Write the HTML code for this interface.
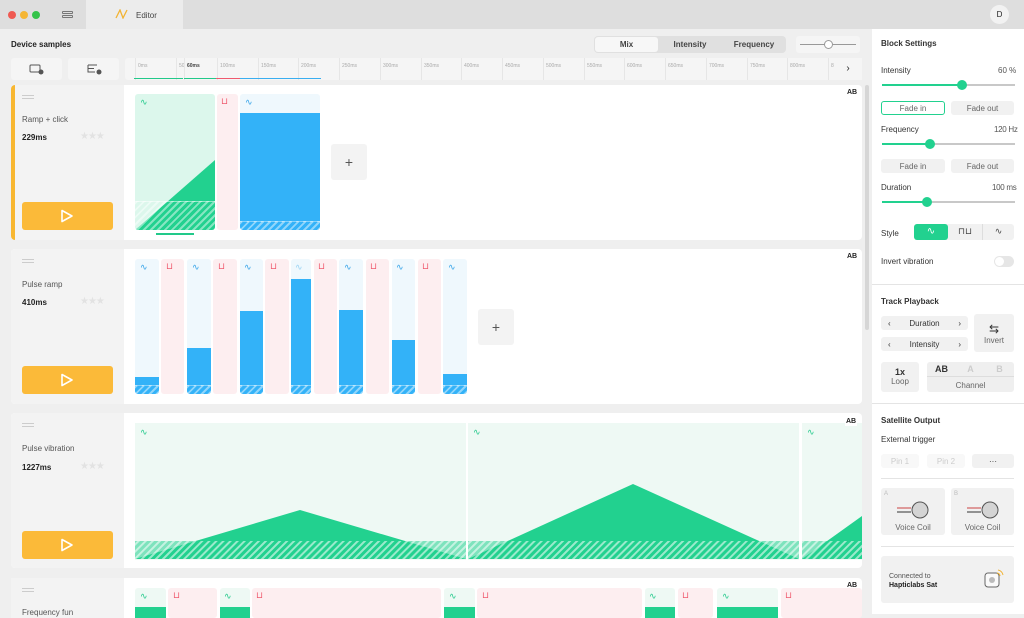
<!DOCTYPE html>
<html><head><meta charset="utf-8"><style>
*{box-sizing:border-box;margin:0;padding:0}
body{width:1024px;height:614px;overflow:hidden;background:#efefef;font-family:"Liberation Sans",sans-serif;color:#222;position:relative}
.a{position:absolute}
.t{font-size:8px}
.b{font-weight:bold}
.btn{position:absolute;background:#f1f1f1;border-radius:3px;font-size:8px;color:#666;display:flex;align-items:center;justify-content:center}
.lbl{position:absolute;font-size:8px;color:#333}
.slider{position:absolute;height:2px;background:#c8c8c8}
.slider i{position:absolute;left:0;top:0;height:2px;background:#22d18f}
.slider b{position:absolute;top:-4px;width:10px;height:10px;border-radius:50%;background:#22d18f}
.hatch{background:repeating-linear-gradient(135deg,rgba(255,255,255,.45) 0 2px,transparent 2px 5px)}
.bl{position:absolute;border-radius:3px}
.fill{position:absolute;bottom:0;width:100%;background:#33b2f8}
.fill:after{content:"";position:absolute;left:0;bottom:0;width:100%;height:8px;background:repeating-linear-gradient(135deg,rgba(255,255,255,.45) 0 2px,transparent 2px 5px);border-top:1px solid rgba(255,255,255,.4)}
.tick{position:absolute;top:58px;height:22px;border-left:1px solid #e6e6e6;font-size:5px;color:#aaa;padding:5px 0 0 2px}
.wave{position:absolute;font-size:9px}
.sep{position:absolute;left:872px;width:152px;height:1px;background:#e4e4e4}
</style></head><body>
<div class="a" style="left:0;top:0;width:1024px;height:29px;background:#dedede"></div>
<div class="a" style="left:8px;top:11px;width:8px;height:8px;border-radius:50%;background:#ef5a52"></div>
<div class="a" style="left:20px;top:11px;width:8px;height:8px;border-radius:50%;background:#f5b635"></div>
<div class="a" style="left:32px;top:11px;width:8px;height:8px;border-radius:50%;background:#35c34a"></div>
<div class="a" style="left:62px;top:11px;width:11px;height:3px;border:1px solid #777;border-radius:1px"></div>
<div class="a" style="left:62px;top:15px;width:11px;height:3px;border:1px solid #777;border-radius:1px"></div>
<div class="a" style="left:86px;top:0;width:97px;height:29px;background:#ececec"></div>
<svg class="a" style="left:115px;top:9px" width="14" height="10"><path d="M1 9 L5 1 L8 9 L12 1" stroke="#f2b333" stroke-width="1.3" fill="none"/></svg>
<div class="a t" style="left:136px;top:11px;color:#444">Editor</div>
<div class="a" style="left:990px;top:5px;width:19px;height:19px;border-radius:50%;background:#f2f2f2;font-size:8px;text-align:center;line-height:19px">D</div>

<div class="a t b" style="left:11px;top:40px">Device samples</div>
<div class="a" style="left:594px;top:36px;width:192px;height:17px;background:#e0e0e0;border-radius:4px"></div>
<div class="a" style="left:595px;top:37px;width:63px;height:15px;background:#f7f7f7;border-radius:3px;font-size:8px;text-align:center;line-height:15px;font-weight:bold;color:#444">Mix</div>
<div class="a" style="left:658px;top:37px;width:64px;height:15px;font-size:8px;text-align:center;line-height:15px;font-weight:bold;color:#444">Intensity</div>
<div class="a" style="left:722px;top:37px;width:64px;height:15px;font-size:8px;text-align:center;line-height:15px;font-weight:bold;color:#444">Frequency</div>
<div class="a" style="left:796px;top:36px;width:64px;height:17px;background:#f5f5f5;border-radius:3px"></div>
<div class="a" style="left:800px;top:44px;width:56px;height:1px;background:#999"></div>
<div class="a" style="left:824px;top:40px;width:9px;height:9px;border-radius:50%;background:#fff;border:1px solid #999"></div>

<div class="a" style="left:11px;top:58px;width:51px;height:22px;background:#f5f5f5;border-radius:3px"></div>
<div class="a" style="left:68px;top:58px;width:51px;height:22px;background:#f5f5f5;border-radius:3px"></div>
<svg class="a" style="left:29px;top:63px" width="16" height="12"><rect x="1" y="2" width="10" height="7" rx="1" fill="none" stroke="#555"/><circle cx="12" cy="9" r="2.5" fill="#555"/></svg>
<svg class="a" style="left:87px;top:63px" width="16" height="12"><path d="M1 2h9M1 2v7h7M1 5.5h6" fill="none" stroke="#555"/><circle cx="12" cy="9" r="2.5" fill="#555"/></svg>
<div class="a" style="left:125px;top:58px;width:737px;height:22px;background:#f5f5f5;border-radius:3px;overflow:hidden"></div>
<div class="tick" style="left:135px">0ms</div><div class="tick" style="left:176px">50</div><div class="tick" style="left:184px;color:#444;font-weight:bold">60ms</div>
<div class="tick" style="left:217px">100ms</div><div class="tick" style="left:258px">150ms</div><div class="tick" style="left:298px">200ms</div><div class="tick" style="left:339px">250ms</div><div class="tick" style="left:380px">300ms</div><div class="tick" style="left:421px">350ms</div><div class="tick" style="left:461px">400ms</div><div class="tick" style="left:502px">450ms</div><div class="tick" style="left:543px">500ms</div><div class="tick" style="left:584px">550ms</div><div class="tick" style="left:624px">600ms</div><div class="tick" style="left:665px">650ms</div><div class="tick" style="left:706px">700ms</div><div class="tick" style="left:747px">750ms</div><div class="tick" style="left:787px">800ms</div><div class="tick" style="left:828px">8</div>
<div class="a" style="left:834px;top:58px;width:28px;height:22px;background:#f5f5f5;font-size:10px;text-align:center;line-height:22px">›</div>
<div class="a" style="left:134px;top:78px;width:49px;height:1px;background:#22c98a"></div>
<div class="a" style="left:184px;top:78px;width:32px;height:1px;background:#22c98a"></div>
<div class="a" style="left:216px;top:78px;width:24px;height:1px;background:#ef5a6e"></div>
<div class="a" style="left:240px;top:78px;width:81px;height:1px;background:#3aaef0"></div>

<div class="a" style="left:865px;top:85px;width:4px;height:245px;background:#d6d6d6;border-radius:2px"></div>

<!-- Track 1 -->
<div class="a" style="left:11px;top:85px;width:851px;height:155px;background:#fff;border-radius:4px"></div>
<div class="a" style="left:11px;top:85px;width:113px;height:155px;background:#f3f3f3;border-left:4px solid #f8b731;border-radius:4px 0 0 4px"></div>
<div class="a" style="left:22px;top:95px;width:12px;height:4px;border-top:1px solid #ccc;border-bottom:1px solid #ccc"></div>
<div class="a t" style="left:22px;top:115px;color:#555">Ramp + click</div>
<div class="a t b" style="left:22px;top:133px">229ms</div>
<div class="a" style="left:80px;top:131px;font-size:10px;color:#e2e2e2;letter-spacing:-1px">★★★</div>
<div class="a" style="left:22px;top:202px;width:91px;height:28px;background:#fbba39;border-radius:3px"></div>
<svg class="a" style="left:60px;top:209px" width="14" height="14"><path d="M2 1.5 L12 7 L2 12.5 Z" fill="none" stroke="#fff" stroke-width="1.6" stroke-linejoin="round"/></svg>
<div class="a t b" style="left:847px;top:89px;font-size:7px">AB</div>
<div class="bl" style="left:135px;top:94px;width:80px;height:136px;background:#dcf7ec;overflow:hidden"><svg width="80" height="136" style="position:absolute;left:0;top:0"><path d="M0 136 L80 66 L80 136 Z" fill="#22d18f"/></svg><div class="hatch" style="position:absolute;left:0;top:107px;width:80px;height:29px;border-top:1px solid rgba(255,255,255,.5)"></div></div>
<div class="wave" style="left:140px;top:97px;color:#22c98a">∿</div>
<div class="a" style="left:156px;top:233px;width:38px;height:2px;background:#22c98a"></div>
<div class="bl" style="left:217px;top:94px;width:21px;height:136px;background:#fdeef0"></div>
<div class="wave" style="left:221px;top:96px;color:#ef5a6e">⊔</div>
<div class="bl" style="left:240px;top:94px;width:80px;height:136px;background:#eff8fd;overflow:hidden"><div class="fill" style="height:117px"></div></div>
<div class="wave" style="left:245px;top:97px;color:#33a2e8">∿</div>
<div class="a" style="left:331px;top:144px;width:36px;height:36px;background:#f3f3f3;border-radius:3px;text-align:center;line-height:36px;font-size:14px;color:#555">+</div>

<!-- Track 2 -->
<div class="a" style="left:11px;top:249px;width:851px;height:155px;background:#fff;border-radius:4px"></div>
<div class="a" style="left:11px;top:249px;width:113px;height:155px;background:#f3f3f3;border-radius:4px 0 0 4px"></div>
<div class="a" style="left:22px;top:259px;width:12px;height:4px;border-top:1px solid #ccc;border-bottom:1px solid #ccc"></div>
<div class="a t" style="left:22px;top:280px;color:#555">Pulse ramp</div>
<div class="a t b" style="left:22px;top:298px">410ms</div>
<div class="a" style="left:80px;top:296px;font-size:10px;color:#e2e2e2;letter-spacing:-1px">★★★</div>
<div class="a" style="left:22px;top:366px;width:91px;height:28px;background:#fbba39;border-radius:3px"></div>
<svg class="a" style="left:60px;top:373px" width="14" height="14"><path d="M2 1.5 L12 7 L2 12.5 Z" fill="none" stroke="#fff" stroke-width="1.6" stroke-linejoin="round"/></svg>
<div class="a t b" style="left:847px;top:253px;font-size:7px">AB</div>
<div class="bl" style="left:135px;top:259px;width:24px;height:135px;background:#eff8fd;overflow:hidden"><div class="fill" style="height:17px"></div></div>
<div class="bl" style="left:161px;top:259px;width:23px;height:135px;background:#fdeef0"></div>
<div class="bl" style="left:187px;top:259px;width:24px;height:135px;background:#eff8fd;overflow:hidden"><div class="fill" style="height:46px"></div></div>
<div class="bl" style="left:213px;top:259px;width:24px;height:135px;background:#fdeef0"></div>
<div class="bl" style="left:240px;top:259px;width:23px;height:135px;background:#eff8fd;overflow:hidden"><div class="fill" style="height:83px"></div></div>
<div class="bl" style="left:265px;top:259px;width:24px;height:135px;background:#fdeef0"></div>
<div class="bl" style="left:291px;top:259px;width:20px;height:135px;background:#eff8fd;overflow:hidden"><div class="fill" style="height:115px"></div></div>
<div class="bl" style="left:314px;top:259px;width:23px;height:135px;background:#fdeef0"></div>
<div class="bl" style="left:339px;top:259px;width:24px;height:135px;background:#eff8fd;overflow:hidden"><div class="fill" style="height:84px"></div></div>
<div class="bl" style="left:366px;top:259px;width:23px;height:135px;background:#fdeef0"></div>
<div class="bl" style="left:392px;top:259px;width:23px;height:135px;background:#eff8fd;overflow:hidden"><div class="fill" style="height:54px"></div></div>
<div class="bl" style="left:418px;top:259px;width:23px;height:135px;background:#fdeef0"></div>
<div class="bl" style="left:443px;top:259px;width:24px;height:135px;background:#eff8fd;overflow:hidden"><div class="fill" style="height:20px"></div></div>
<div class="wave" style="left:140px;top:262px;color:#33a2e8">∿</div><div class="wave" style="left:166px;top:261px;color:#ef5a6e">⊔</div>
<div class="wave" style="left:192px;top:262px;color:#33a2e8">∿</div><div class="wave" style="left:218px;top:261px;color:#ef5a6e">⊔</div>
<div class="wave" style="left:244px;top:262px;color:#33a2e8">∿</div><div class="wave" style="left:270px;top:261px;color:#ef5a6e">⊔</div>
<div class="wave" style="left:295px;top:262px;color:#99d3f4">∿</div><div class="wave" style="left:318px;top:261px;color:#ef5a6e">⊔</div>
<div class="wave" style="left:344px;top:262px;color:#33a2e8">∿</div><div class="wave" style="left:370px;top:261px;color:#ef5a6e">⊔</div>
<div class="wave" style="left:396px;top:262px;color:#33a2e8">∿</div><div class="wave" style="left:422px;top:261px;color:#ef5a6e">⊔</div>
<div class="wave" style="left:448px;top:262px;color:#33a2e8">∿</div>
<div class="a" style="left:478px;top:309px;width:36px;height:36px;background:#f3f3f3;border-radius:3px;text-align:center;line-height:36px;font-size:14px;color:#555">+</div>

<!-- Track 3 -->
<div class="a" style="left:11px;top:413px;width:851px;height:155px;background:#fff;border-radius:4px"></div>
<div class="a" style="left:11px;top:413px;width:113px;height:155px;background:#f3f3f3;border-radius:4px 0 0 4px"></div>
<div class="a" style="left:22px;top:423px;width:12px;height:4px;border-top:1px solid #ccc;border-bottom:1px solid #ccc"></div>
<div class="a t" style="left:22px;top:444px;color:#555">Pulse vibration</div>
<div class="a t b" style="left:22px;top:463px">1227ms</div>
<div class="a" style="left:80px;top:461px;font-size:10px;color:#e2e2e2;letter-spacing:-1px">★★★</div>
<div class="a" style="left:22px;top:531px;width:91px;height:28px;background:#fbba39;border-radius:3px"></div>
<svg class="a" style="left:60px;top:538px" width="14" height="14"><path d="M2 1.5 L12 7 L2 12.5 Z" fill="none" stroke="#fff" stroke-width="1.6" stroke-linejoin="round"/></svg>
<svg class="a" style="left:135px;top:423px" width="727" height="137">
<rect x="0" y="0" width="331" height="137" fill="#eef9f4"/><rect x="333" y="0" width="331" height="137" fill="#eef9f4"/><rect x="667" y="0" width="60" height="137" fill="#eef9f4"/>
<path d="M0 136 L165 87 L331 136 Z" fill="#22d18f"/><path d="M333 136 L498 61 L664 136 Z" fill="#22d18f"/><path d="M667 136 L727 93 L727 136 Z" fill="#22d18f"/>
<defs><pattern id="h" width="5" height="5" patternUnits="userSpaceOnUse" patternTransform="rotate(45)"><rect width="2" height="5" fill="#fff" fill-opacity=".55"/></pattern></defs>
<rect x="0" y="118" width="727" height="18" fill="#22d18f" fill-opacity=".55"/><rect x="0" y="118" width="727" height="18" fill="url(#h)"/>
<rect x="331" y="0" width="2" height="137" fill="#fff"/><rect x="664" y="0" width="3" height="137" fill="#fff"/>
</svg>
<div class="wave" style="left:140px;top:427px;color:#22c98a">∿</div><div class="wave" style="left:473px;top:427px;color:#22c98a">∿</div><div class="wave" style="left:807px;top:427px;color:#22c98a">∿</div>
<div class="a t b" style="left:845px;top:417px;font-size:7px;background:#fff;padding:1px">AB</div>

<!-- Track 4 -->
<div class="a" style="left:11px;top:578px;width:851px;height:40px;background:#fff;border-radius:4px"></div>
<div class="a" style="left:11px;top:578px;width:113px;height:40px;background:#f3f3f3"></div>
<div class="a" style="left:22px;top:588px;width:12px;height:4px;border-top:1px solid #ccc;border-bottom:1px solid #ccc"></div>
<div class="a t" style="left:22px;top:608px;color:#555">Frequency fun</div>
<div class="a t b" style="left:847px;top:582px;font-size:7px">AB</div>
<div class="bl" style="left:135px;top:588px;width:31px;height:30px;background:#eef9f4"><div style="position:absolute;top:19px;width:100%;height:11px;background:#22d18f"></div></div>
<div class="bl" style="left:168px;top:588px;width:49px;height:30px;background:#fdeef0"></div>
<div class="bl" style="left:220px;top:588px;width:30px;height:30px;background:#eef9f4"><div style="position:absolute;top:19px;width:100%;height:11px;background:#22d18f"></div></div>
<div class="bl" style="left:252px;top:588px;width:189px;height:30px;background:#fdeef0"></div>
<div class="bl" style="left:444px;top:588px;width:31px;height:30px;background:#eef9f4"><div style="position:absolute;top:19px;width:100%;height:11px;background:#22d18f"></div></div>
<div class="bl" style="left:477px;top:588px;width:165px;height:30px;background:#fdeef0"></div>
<div class="bl" style="left:645px;top:588px;width:30px;height:30px;background:#eef9f4"><div style="position:absolute;top:19px;width:100%;height:11px;background:#22d18f"></div></div>
<div class="bl" style="left:678px;top:588px;width:35px;height:30px;background:#fdeef0"></div>
<div class="bl" style="left:717px;top:588px;width:61px;height:30px;background:#eef9f4"><div style="position:absolute;top:19px;width:100%;height:11px;background:#22d18f"></div></div>
<div class="bl" style="left:781px;top:588px;width:81px;height:30px;background:#fdeef0"></div>
<div class="wave" style="left:140px;top:591px;color:#22c98a">∿</div><div class="wave" style="left:173px;top:590px;color:#ef5a6e">⊔</div><div class="wave" style="left:224px;top:591px;color:#22c98a">∿</div><div class="wave" style="left:256px;top:590px;color:#ef5a6e">⊔</div><div class="wave" style="left:449px;top:591px;color:#22c98a">∿</div><div class="wave" style="left:482px;top:590px;color:#ef5a6e">⊔</div><div class="wave" style="left:649px;top:591px;color:#22c98a">∿</div><div class="wave" style="left:682px;top:590px;color:#ef5a6e">⊔</div><div class="wave" style="left:722px;top:591px;color:#22c98a">∿</div><div class="wave" style="left:785px;top:590px;color:#ef5a6e">⊔</div>

<!-- Right panel -->
<div class="a" style="left:872px;top:29px;width:152px;height:585px;background:#fff"></div>
<div class="lbl b" style="left:881px;top:39px">Block Settings</div>
<div class="lbl" style="left:881px;top:66px">Intensity</div><div class="lbl" style="left:998px;top:66px;color:#555">60 %</div>
<div class="slider" style="left:882px;top:84px;width:133px"><i style="width:79px"></i><b style="left:75px"></b></div>
<div class="btn" style="left:881px;top:101px;width:64px;height:14px;background:#fff;border:1px solid #22d18f">Fade in</div>
<div class="btn" style="left:951px;top:101px;width:63px;height:14px">Fade out</div>
<div class="lbl" style="left:881px;top:125px">Frequency</div><div class="lbl" style="left:994px;top:125px;color:#555;letter-spacing:-0.3px">120 Hz</div>
<div class="slider" style="left:882px;top:143px;width:133px"><i style="width:48px"></i><b style="left:43px"></b></div>
<div class="btn" style="left:881px;top:159px;width:64px;height:14px">Fade in</div>
<div class="btn" style="left:951px;top:159px;width:63px;height:14px">Fade out</div>
<div class="lbl" style="left:881px;top:183px">Duration</div><div class="lbl" style="left:992px;top:183px;color:#555;letter-spacing:-0.3px">100 ms</div>
<div class="slider" style="left:882px;top:201px;width:133px"><i style="width:45px"></i><b style="left:40px"></b></div>
<div class="lbl" style="left:881px;top:229px">Style</div>
<div class="a" style="left:914px;top:224px;width:100px;height:16px;background:#f1f1f1;border-radius:3px"></div>
<div class="a" style="left:914px;top:224px;width:34px;height:16px;background:#22d18f;border-radius:3px;color:#fff;text-align:center;font-size:10px;line-height:15px">∿</div>
<div class="a" style="left:948px;top:224px;width:34px;height:16px;text-align:center;font-size:9px;line-height:15px;color:#444">⊓⊔</div>
<div class="a" style="left:982px;top:224px;width:32px;height:16px;text-align:center;font-size:9px;line-height:15px;color:#444;border-left:1px solid #ddd">∿</div>
<div class="lbl" style="left:881px;top:257px">Invert vibration</div>
<div class="a" style="left:994px;top:256px;width:20px;height:11px;border-radius:6px;background:#e6e6e6"><div style="position:absolute;left:1px;top:1px;width:9px;height:9px;border-radius:50%;background:#fff"></div></div>
<div class="sep" style="top:284px"></div>
<div class="lbl b" style="left:881px;top:297px">Track Playback</div>
<div class="btn" style="left:881px;top:316px;width:87px;height:14px;justify-content:space-between;padding:0 7px;color:#333"><span>‹</span><span>Duration</span><span>›</span></div>
<div class="btn" style="left:881px;top:337px;width:87px;height:14px;justify-content:space-between;padding:0 7px;color:#333"><span>‹</span><span>Intensity</span><span>›</span></div>
<div class="btn" style="left:974px;top:314px;width:40px;height:38px;flex-direction:column"><span style="font-size:12px;color:#333">⇆</span><span>Invert</span></div>
<div class="btn" style="left:881px;top:362px;width:38px;height:30px;flex-direction:column;line-height:10px"><span style="font-size:9px;color:#333;font-weight:bold">1x</span><span>Loop</span></div>
<div class="a" style="left:927px;top:362px;width:87px;height:30px;background:#efefef;border-radius:3px"></div>
<div class="a" style="left:927px;top:362px;width:87px;height:15px;border-bottom:1px solid #ddd;display:flex;font-size:9px;font-weight:bold;text-align:center;line-height:15px"><span style="flex:1;color:#333">AB</span><span style="flex:1;color:#ccc">A</span><span style="flex:1;color:#ccc">B</span></div>
<div class="a" style="left:927px;top:381px;width:87px;font-size:8px;color:#666;text-align:center">Channel</div>
<div class="sep" style="top:403px"></div>
<div class="lbl b" style="left:881px;top:416px">Satellite Output</div>
<div class="lbl" style="left:881px;top:435px">External trigger</div>
<div class="btn" style="left:881px;top:454px;width:38px;height:14px;background:#f8f8f8;color:#ccc">Pin 1</div>
<div class="btn" style="left:927px;top:454px;width:38px;height:14px;background:#f8f8f8;color:#ccc">Pin 2</div>
<div class="btn" style="left:972px;top:454px;width:42px;height:14px;color:#333">···</div>
<div class="a" style="left:881px;top:478px;width:133px;height:1px;background:#e4e4e4"></div>
<div class="btn" style="left:881px;top:488px;width:64px;height:47px;align-items:flex-end;padding-bottom:3px">Voice Coil</div>
<div class="btn" style="left:951px;top:488px;width:63px;height:47px;align-items:flex-end;padding-bottom:3px">Voice Coil</div>
<div class="a" style="left:884px;top:491px;font-size:6px;color:#bbb">A</div><div class="a" style="left:954px;top:491px;font-size:6px;color:#bbb">B</div>
<svg class="a" style="left:895px;top:500px" width="40" height="20"><path d="M2 8h14" stroke="#c44"/><path d="M2 12h14" stroke="#333"/><circle cx="25" cy="10" r="8" fill="#d4d4d4" stroke="#555"/></svg>
<svg class="a" style="left:965px;top:500px" width="40" height="20"><path d="M2 8h14" stroke="#c44"/><path d="M2 12h14" stroke="#333"/><circle cx="25" cy="10" r="8" fill="#d4d4d4" stroke="#555"/></svg>
<div class="a" style="left:881px;top:546px;width:133px;height:1px;background:#e4e4e4"></div>
<div class="a" style="left:881px;top:556px;width:133px;height:47px;background:#f1f1f1;border-radius:3px"></div>
<div class="a" style="left:889px;top:572px;font-size:7px;color:#555;line-height:9px">Connected to<br><b style="color:#222">Hapticlabs Sat</b></div>
<svg class="a" style="left:983px;top:567px" width="22" height="24"><rect x="2" y="6" width="14" height="14" rx="3" fill="#fafafa" stroke="#666"/><circle cx="9" cy="13" r="3" fill="#bbb"/><path d="M15 3a6 6 0 0 1 5 5M14 6a3 3 0 0 1 3 3" stroke="#f2b333" fill="none"/></svg>
</body></html>
